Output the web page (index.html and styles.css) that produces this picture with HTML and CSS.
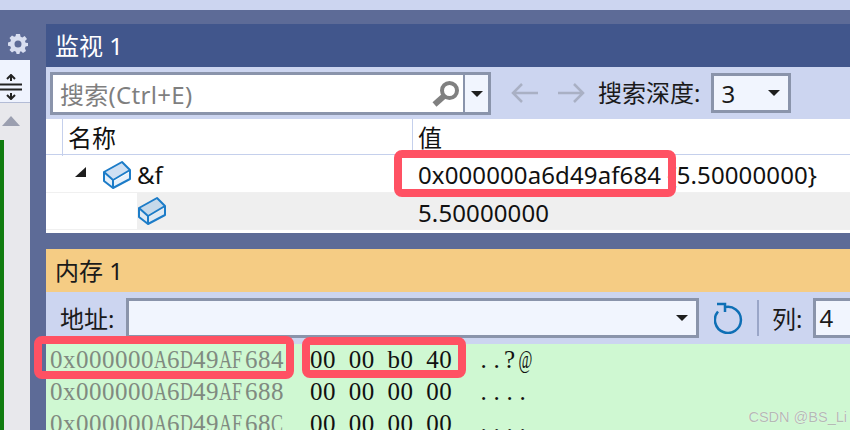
FILE: index.html
```html
<!DOCTYPE html>
<html lang="zh">
<head>
<meta charset="utf-8">
<title>监视 1</title>
<link rel="stylesheet" href="styles.css">
</head>
<body>
<div class="topband"></div>
<div class="workspace">
  <aside class="rail">
    <div class="gear-slot">
      <svg class="gear" viewBox="0 0 20 20"><path fill="#d8def0" fill-rule="evenodd" d="M8 0h4l.6 2.8 1.7.7L16.700 2 19 5l-2 2 .6 1.700L20 9v3l-2.400.6-.7 1.700L18 17l-3 2-2-1.700-1 .5-.6 2.200H8.600L8 17.800l-1.700-.7L4 18.600 1.500 16l1.500-2-.7-1.700L0 11.800V8.400l2.400-.7.6-1.600L1.500 4 4 1.500l2.200 1.300 1.300-.5zM10 6.500a3.500 3.500 0 1 0 0 7 3.500 3.500 0 0 0 0-7z"/></svg>
    </div>
    <div class="rail-tool">
      <svg class="split" viewBox="0 0 22 26"><path fill="none" stroke="#222" stroke-width="2" d="M0 10.500h22M0 15.500h22"/><path fill="none" stroke="#222" stroke-width="2" d="M11 1v6M11 19v6M7 5l4-4 4 4M7 21l4 4 4-4"/></svg>
    </div>
    <div class="rail-track">
      <span class="up"></span>
      <div class="thumb"></div>
    </div>
  </aside>
  <main class="panels">
    <section class="watch">
      <header class="title title-blue">监视 1</header>
      <div class="toolbar watch-bar">
        <div class="search">
          <span class="search-text">搜索(Ctrl+E)</span>
          <svg class="lens" viewBox="0 0 28 28"><circle cx="17.500" cy="10.500" r="7.500" fill="none" stroke="#808080" stroke-width="4"/><path d="M11.500 16.500l-9 8" stroke="#808080" stroke-width="6"/></svg>
          <span class="drop-btn"><i class="caret"></i></span>
        </div>
        <svg class="arrow" viewBox="0 0 28 20"><path fill="none" stroke="#a9b0c4" stroke-width="2.500" d="M27 10H2M11 1l-9 9 9 9"/></svg>
        <svg class="arrow arrow-r" viewBox="0 0 28 20"><path fill="none" stroke="#a9b0c4" stroke-width="2.500" d="M1 10h25M17 1l9 9-9 9"/></svg>
        <span class="label depth-label">搜索深度:</span>
        <div class="select depth"><span>3</span><i class="caret"></i></div>
      </div>
      <div class="table">
        <div class="thead">
          <div class="th-gutter"></div>
          <div class="th">名称</div>
          <div class="th">值</div>
        </div>
        <div class="row row-top">
          <div class="name-cell">
            <i class="expander"></i>
            <svg class="cube" viewBox="0 0 30 30"><path fill="#cfe0f3" d="M2 13 20 2l8 8-18 9z"/><path fill="#e6f0fa" d="M2 13l9 9v6l-9-8z M11 22 28 12v7L11 28z"/><path fill="none" stroke="#1c7cc8" stroke-width="2" stroke-linejoin="round" d="M2 12 20 2l8 8-17 10zM2 12v9l9 7V20M11 28l17-9v-9"/></svg>
            <span class="var">&amp;f</span>
          </div>
          <div class="value-cell"><span class="pointer">0x000000a6d49af684</span>{5.50000000}</div>
        </div>
        <div class="row-child">
          <div class="child-gap"></div>
          <div class="child-body">
            <div class="child-icon">
              <svg class="cube" viewBox="0 0 30 30"><path fill="#c6d9ea" d="M2 13 20 2l8 8-18 9z"/><path fill="#dfe9f3" d="M2 13l9 9v6l-9-8z M11 22 28 12v7L11 28z"/><path fill="none" stroke="#1c7cc8" stroke-width="2" stroke-linejoin="round" d="M2 12 20 2l8 8-17 10zM2 12v9l9 7V20M11 28l17-9v-9"/></svg>
            </div>
            <div class="child-value">5.50000000</div>
          </div>
        </div>
        <div class="row-end"></div>
      </div>
    </section>
    <section class="memory">
      <header class="title title-gold">内存 1</header>
      <div class="toolbar mem-bar">
        <span class="label addr-label">地址:</span>
        <div class="select addr"><i class="caret"></i></div>
        <svg class="refresh" viewBox="0 0 30 32"><path fill="none" stroke="#0e6fb5" stroke-width="2.500" d="M10 5.500a13 13 0 1 1-6 4M3 2h8v8"/></svg>
        <span class="sep"></span>
        <span class="label cols-label">列:</span>
        <div class="select cols"><span>4</span></div>
      </div>
      <div class="dump">
        <div class="addr-col">0x000000<b>A</b>6<b>D</b>49<b>A</b><b>F</b>684</div>
        <div class="hex-col">00 00 b0 40</div>
        <div class="ascii-col"><i>.</i><i>.</i><i>?</i><b>@</b></div>
        <div class="addr-col">0x000000<b>A</b>6<b>D</b>49<b>A</b><b>F</b>688</div>
        <div class="hex-col">00 00 00 00</div>
        <div class="ascii-col"><i>.</i><i>.</i><i>.</i><i>.</i></div>
        <div class="addr-col">0x000000<b>A</b>6<b>D</b>49<b>A</b><b>F</b>68<b>C</b></div>
        <div class="hex-col">00 00 00 00</div>
        <div class="ascii-col"><i>.</i><i>.</i><i>.</i><i>.</i></div>
      </div>
      <span class="watermark">CSDN @BS_Li</span>
    </section>
  </main>
</div>
<div class="mark mark-value"></div>
<div class="mark mark-addr"></div>
<div class="mark mark-hex"></div>
</body>
</html>
```
FILE: styles.css
```css
* { box-sizing: border-box; }
html, body { margin: 0; height: 430px; overflow: hidden; }
body {
  position: relative;
  width: 850px;
  background: #5d6b97;
  font-family: "Noto Sans", "Noto Sans CJK SC", sans-serif;
  font-size: 24px;
  color: #1a1a1a;
}
.topband { height: 10px; background: #ccd5f0; }
.workspace { display: flex; height: 420px; }

/* left rail */
.rail { width: 46px; flex: none; display: flex; flex-direction: column; }
.gear-slot { height: 53px; padding: 24px 0 0 8px; }
.gear { display: block; width: 20px; height: 20px; }
.rail-tool {
  width: 30px; height: 47px; background: #eff3fe;
  border-bottom: 1px solid #b3bcd6;
  padding: 14px 0 0 0;
}
.split { width: 22px; height: 26px; display: block; }
.rail-track { width: 30px; flex: 1; background: #e8e8ec; padding-top: 13px; }
.up {
  display: block; width: 0; height: 0; margin-left: 2px;
  border: 9px solid transparent; border-top: 0;
  border-bottom: 10px solid #9b9fb0;
}
.thumb { width: 4px; height: 290px; margin-top: 14px; background: #107c10; }

/* panels */
.panels { flex: 1; padding-top: 14px; min-width: 0; }
.title { height: 43px; padding-left: 9px; line-height: 44px; }
.title-blue { background: #41568c; color: #fff; }
.title-gold { background: #f5cc84; }
.toolbar { display: flex; align-items: center; background: #ccd5f0; }
.watch-bar { height: 52px; padding-left: 4px; }
.label { line-height: 1; }

.search {
  width: 441px; height: 43px; border: 3px solid #8a94ab;
  background: #fff; display: flex; align-items: center;
  margin-top: 1px;
}
.search-text { flex: 1; padding-left: 7px; color: #7f7f7f; letter-spacing: .3px; }
.lens { width: 28px; height: 28px; margin-right: 3px; }
.drop-btn {
  width: 25px; height: 100%; background: #f1f5fe;
  border-left: 2px solid #8a94ab;
  display: flex; align-items: center; justify-content: center;
}
.caret {
  display: block; width: 0; height: 0;
  border: 6px solid transparent; border-bottom: 0;
  border-top: 6px solid #1e1e1e;
}
.arrow { width: 28px; height: 20px; margin-left: 20px; }
.arrow-r { margin-left: 18px; }
.depth-label { margin-left: 13px; }
.select {
  background: #f1f5fe; border: 3px solid #8a94ab;
  display: flex; align-items: center;
}
.depth {
  width: 80px; height: 40px; margin-left: 11px;
  padding: 0 8px 0 7px; justify-content: space-between;
}

/* watch table */
.table { background: #fff; }
.thead {
  height: 36px; display: grid; grid-template-columns: 16px 350px 1fr;
  border-bottom: 1px solid #c5d0ec;
}
.th { padding-left: 5px; line-height: 37px; color: #111; border-left: 1px solid #c5d0ec; }
.row { display: grid; grid-template-columns: 366px 1fr; }
.row-top { height: 37px; }
.name-cell { display: flex; align-items: center; padding-left: 29px; }
.expander {
  display: block; width: 0; height: 0; margin-top: -7px;
  border-style: solid; border-width: 0 0 10px 11px;
  border-color: transparent transparent #1e1e1e transparent;
}
.cube { width: 30px; height: 30px; display: block; }
.name-cell .cube { margin-left: 16px; }
.var { margin-left: 5px; color: #111; line-height: 40px; }
.value-cell { padding-left: 6px; line-height: 40px; color: #111; white-space: nowrap; letter-spacing: .11px; }
.pointer { display: inline-block; width: 249.500px; }
.row-child { height: 38px; display: flex; border-top: 1px solid #f0f0f0; border-bottom: 1px solid #f0f0f0; }
.child-gap { width: 17px; flex: none; background: #fff; }
.child-body { flex: 1; display: flex; background: #efefef; }
.child-icon {
  width: 349px; flex: none; padding-left: 74px;
  background: linear-gradient(90deg, #fff 74px, #efefef 74px);
  display: flex; align-items: center;
}
.child-value { padding-left: 6px; line-height: 40px; color: #111; letter-spacing: .11px; }
.row-end { height: 3px; }

/* memory */
.memory { position: relative; margin-top: 16px; }
.mem-bar { height: 52px; padding-left: 14px; }
.addr-label { width: 66px; margin-top: 2px; }
.select.addr {
  width: 573px; height: 40px; justify-content: flex-end; padding-right: 8px; margin-top: -1px;
}
.refresh { width: 30px; height: 32px; margin-left: 15px; }
.sep { width: 2px; height: 36px; background: #9aa6c8; margin-left: 13px; }
.cols-label { margin-left: 13px; margin-top: 2px; }
.select.cols {
  flex: 1; height: 40px; margin-left: 11px; border-right: 0; padding-left: 3px; margin-top: -1px;
}
.dump {
  height: 86px; background: #cff8d2;
  display: grid; grid-template-columns: 260px 167px 1fr;
  grid-auto-rows: 32px; padding-left: 4px;
  font-family: "Liberation Serif", serif; font-size: 25px;
  overflow: hidden;
}
.dump > div { line-height: 31px; white-space: pre; }
.addr-col { color: #808a80; letter-spacing: .5px; }
.addr-col b {
  display: inline-block; width: 13px; font-weight: 400; letter-spacing: 0;
  transform: scaleX(.72); transform-origin: left;
}
.hex-col { color: #111; letter-spacing: .5px; word-spacing: 6px; }
.ascii-col i, .ascii-col b {
  display: inline-block; width: 13px; text-align: center; font-style: normal; font-weight: 400; color: #111;
}
.ascii-col b { transform: scaleX(.6); }
.watermark {
  position: absolute; right: 3px; bottom: 5px;
  font-family: "Liberation Sans", sans-serif; font-size: 14.5px; color: #b4bab4;
  text-shadow: 0 0 1px #fff;
}

/* red annotation frames */
.mark { position: absolute; border: 8px solid #ff5163; border-radius: 8px; }
.mark-value { left: 394px; top: 150px; width: 282px; height: 47px; }
.mark-addr { left: 34px; top: 336px; width: 260px; height: 43px; }
.mark-hex { left: 302px; top: 337px; width: 164px; height: 41px; }
```
